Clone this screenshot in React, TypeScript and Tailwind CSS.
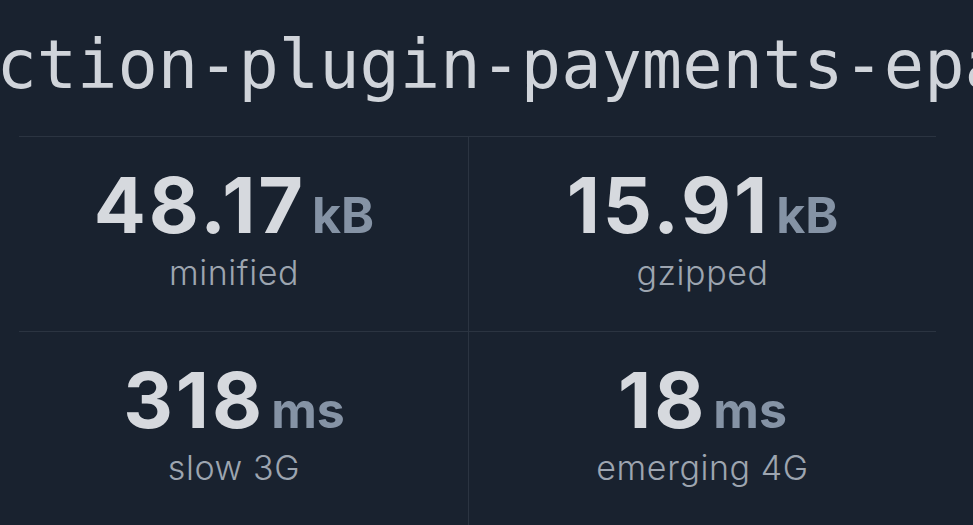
const stats = [
  [
    { value: "48.17", unit: "kB", label: "minified" },
    { value: "15.91", unit: "kB", label: "gzipped" },
  ],
  [
    { value: "318", unit: "ms", label: "slow 3G" },
    { value: "18", unit: "ms", label: "emerging 4G" },
  ],
];

const Stat = ({ value, unit, label }: { value: string; unit: string; label: string }) => (
  <div className="flex flex-col items-center pt-[30px]">
    <div className="flex items-baseline leading-none">
      <span className="text-[77px] font-bold tracking-[3px] text-[#d6d9de]">{value}</span>
      <span className="ml-[6px] text-[50px] font-bold text-[#8593a5]">{unit}</span>
    </div>
    <div className="mt-[12px] text-[34px] font-light leading-none tracking-[0.6px] text-[#9da5b0]">{label}</div>
  </div>
);

export default function App() {
  return (
    <div
      className="h-[525px] w-[973px] overflow-hidden bg-[#19222f]"
      style={{ fontFamily: "Inter, 'Noto Sans', sans-serif" }}
    >
      <div className="flex h-[136px] justify-center overflow-hidden pt-[32px] pr-[12px]">
        <h1
          className="shrink-0 whitespace-nowrap text-[67px] leading-none text-[#d0d4da]"
          style={{ fontFamily: "'DejaVu Sans Mono', 'Liberation Mono', monospace" }}
        >
          reaction-plugin-payments-epays
        </h1>
      </div>
      <div className="w-[936px]">
        {stats.map((row, i) => (
          <div key={i}>
            <div className="ml-[19px] h-px bg-[#2b3441]" />
            <div className="grid h-[194px] grid-cols-2">
              <Stat {...row[0]} />
              <div className="border-l border-[#2b3441]">
                <Stat {...row[1]} />
              </div>
            </div>
          </div>
        ))}
      </div>
    </div>
  );
}
